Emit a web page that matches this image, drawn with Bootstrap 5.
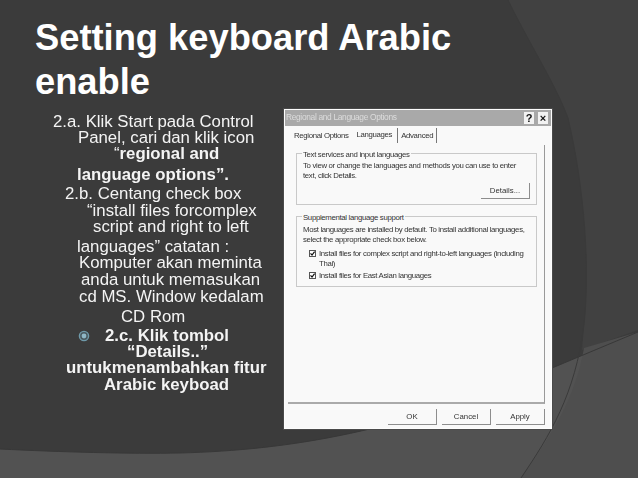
<!DOCTYPE html>
<html lang="id">
<head>
<meta charset="utf-8">
<title>Setting keyboard Arabic enable</title>
<link href="https://cdn.jsdelivr.net/npm/bootstrap@5.3.0/dist/css/bootstrap.min.css" rel="stylesheet">
<style>
html,body{margin:0;background:#3b3b3b;overflow:hidden}
.slide-frame{position:relative;width:638px;height:478px;overflow:hidden;font-family:"Liberation Sans",Arial,sans-serif;color:#f4f4f4;background:#3b3b3b}
.slide-bg{position:absolute;inset:0;width:638px;height:478px}
.slide-inner{position:relative}
.slide-title{font-size:36.3px;line-height:44px;font-weight:700;color:#fff;margin:0;padding:16px 0 0 35px;font-family:inherit;width:480px}
.slide-body{margin-top:5px}
.text-col{width:284px;flex:none;padding-top:5px;font-size:16.8px;line-height:16px;white-space:nowrap;filter:blur(.25px)}
.tl{display:block}
.tl b{font-weight:700}
.t1{padding-left:53px}.t2{padding-left:78px}.t3{padding-left:114px}
.t4{padding-left:77px;margin-top:5px}.t5{padding-left:65px;margin-top:3px}.t6{padding-left:87px;margin-top:1px}
.t7{padding-left:93px}.t8{padding-left:77px;margin-top:4px}.t9{padding-left:79px}
.t10{padding-left:81px;margin-top:1px}.t11{padding-left:79px;margin-top:1px}.t12{padding-left:121px;margin-top:4px}
.t13{padding-left:78px;margin-top:3px}.t14{padding-left:127px}.t15{padding-left:66px}.t16{padding-left:104px;margin-top:1px}
.bullet-dot{width:12px;height:12px;margin-right:15px;vertical-align:-1px}
.dlg{position:relative;width:268px;height:320px;background:#f9f9f9;border:1px solid #fdfdfd;box-shadow:0 0 0 1px #4a4a4a;font-size:7.8px;letter-spacing:-.33px;line-height:9.5px;color:#333;filter:blur(.35px);padding:0 3px;white-space:nowrap}
.dlg-titlebar{height:16px;margin:0 -3px;background:#a9a9a9;color:#dcdcdc;font-size:8.4px;padding:0 3px 0 1px}
.dlg-ctl{width:10px;height:12px;background:#f2f2f2;color:#111;font-weight:700;font-size:11px;line-height:12px;text-align:center;letter-spacing:0}
.dlg-tabs{height:19px;padding-left:6px;font-size:7.8px}
.dlg-sep{width:1px;height:15px;background:#777}
.dlg-tab-a{margin-right:8px}.dlg-tab-b{margin-right:5px;margin-top:-2px}.dlg-tab-c{margin:0 3px}
.dlg-panel{height:259px;margin-right:3px;border-right:1px solid #999;border-bottom:2px solid #aaa;padding:8px 7px 0 8px}
.grp{position:relative;width:241px;border:1px solid #c9c9c9;padding:7px 5px 0 6px}
.grp-a{height:52px;margin-bottom:11px}
.grp-b{height:71px;padding-top:8px}
.grp-label{position:absolute;left:5px;top:-4px;background:#f9f9f9;padding:0 1px 0 1px}
.dlg-btn{width:49px;height:16px;padding:0;border:0;border-radius:0;border-right:1px solid #8d8d8d;border-bottom:1px solid #8d8d8d;background:#f9f9f9;color:#333;font-size:7.8px;line-height:15px}
.dlg-btn:hover{background:#f9f9f9;color:#333}
.btn-details{position:absolute;right:6px;top:29px}
.chk-row{margin-top:5px;margin-left:6px;gap:3px;display:flex}
.chk-row.chk-b{margin-top:3px}
.chk-svg{width:7px;height:7px;flex:none;margin-top:1px}
.dlg-actions{gap:5px;margin-top:5px;padding-right:3px}
</style>
</head>
<body>
<div class="slide-frame">
  <svg class="slide-bg" viewBox="0 0 638 478" aria-hidden="true">
    <path d="M508 0C530 45 556 85 568 118C585 190 590 270 584 325L582 350L638 330V0Z" fill="#414141"/>
    <path d="M0 449C60 452 130 454 180 453C290 450 400 432 552 368L638 332V478H0Z" fill="#525252"/>
    <path d="M584 348C575 400 550 437 521 478L638 478V332Z" fill="#4e4e4e"/>
    <path d="M0 449C60 452 130 454 180 453C290 450 400 432 552 368L638 332" fill="none" stroke="#383838" stroke-width="1"/>
    <path d="M508 0C530 45 556 85 568 118C585 190 590 270 584 325C575 395 550 435 521 478" fill="none" stroke="#3a3a3a" stroke-width="1"/>
  </svg>
  <div class="slide-inner">
    <h1 class="slide-title">Setting keyboard Arabic enable</h1>
    <div class="slide-body d-flex">
      <div class="text-col">
        <span class="tl t1">2.a. Klik Start pada Control</span>
        <span class="tl t2">Panel, cari dan klik icon</span>
        <span class="tl t3">“<b>regional and</b></span>
        <span class="tl t4"><b>language options”.</b></span>
        <span class="tl t5">2.b. Centang check box</span>
        <span class="tl t6">“install files forcomplex</span>
        <span class="tl t7">script and right to left</span>
        <span class="tl t8">languages” catatan :</span>
        <span class="tl t9">Komputer akan meminta</span>
        <span class="tl t10">anda untuk memasukan</span>
        <span class="tl t11">cd MS. Window kedalam</span>
        <span class="tl t12">CD Rom</span>
        <span class="tl t13"><svg class="bullet-dot" viewBox="0 0 12 12" aria-hidden="true"><circle cx="6" cy="6" r="4.6" fill="#4a5a60" stroke="#6f9aaa" stroke-width="1.4"/><circle cx="6" cy="6" r="2.4" fill="#8fb7c6"/></svg><b>2.c. Klik tombol</b></span>
        <span class="tl t14"><b>“Details..”</b></span>
        <span class="tl t15"><b>untukmenambahkan fitur</b></span>
        <span class="tl t16"><b>Arabic keyboad</b></span>
      </div>
      <div class="dlg">
        <div class="dlg-titlebar d-flex align-items-center justify-content-between">
          <span>Regional and Language Options</span>
          <span class="d-flex gap-1"><span class="dlg-ctl">?</span><span class="dlg-ctl">×</span></span>
        </div>
        <div class="dlg-tabs d-flex align-items-center">
          <span class="dlg-tab-a">Regional Options</span>
          <span class="dlg-tab-b">Languages</span>
          <span class="dlg-sep"></span>
          <span class="dlg-tab-c">Advanced</span>
          <span class="dlg-sep"></span>
        </div>
        <div class="dlg-panel">
          <div class="grp grp-a">
            <span class="grp-label">Text services and input languages</span>
            To view or change the languages and methods you can use to enter<br>text, click Details.
            <button type="button" class="btn dlg-btn btn-details">Details...</button>
          </div>
          <div class="grp grp-b">
            <span class="grp-label">Supplemental language support</span>
            Most languages are installed by default. To install additional languages,<br>select the appropriate check box below.
            <div class="chk-row">
              <svg class="chk-svg" viewBox="0 0 7 7" aria-hidden="true"><rect x=".5" y=".5" width="6" height="6" fill="#fff" stroke="#555"/><path d="M1.5 3.4L3 5L5.6 1.6" fill="none" stroke="#111" stroke-width="1.2"/></svg>
              <span>Install files for complex script and right-to-left languages (including<br>Thai)</span>
            </div>
            <div class="chk-row chk-b">
              <svg class="chk-svg" viewBox="0 0 7 7" aria-hidden="true"><rect x=".5" y=".5" width="6" height="6" fill="#fff" stroke="#555"/><path d="M1.5 3.4L3 5L5.6 1.6" fill="none" stroke="#111" stroke-width="1.2"/></svg>
              <span>Install files for East Asian languages</span>
            </div>
          </div>
        </div>
        <div class="dlg-actions d-flex justify-content-end">
          <button type="button" class="btn dlg-btn">OK</button>
          <button type="button" class="btn dlg-btn">Cancel</button>
          <button type="button" class="btn dlg-btn">Apply</button>
        </div>
      </div>
    </div>
  </div>
</div>
<script src="https://cdn.jsdelivr.net/npm/bootstrap@5.3.0/dist/js/bootstrap.bundle.min.js"></script>
</body>
</html>
